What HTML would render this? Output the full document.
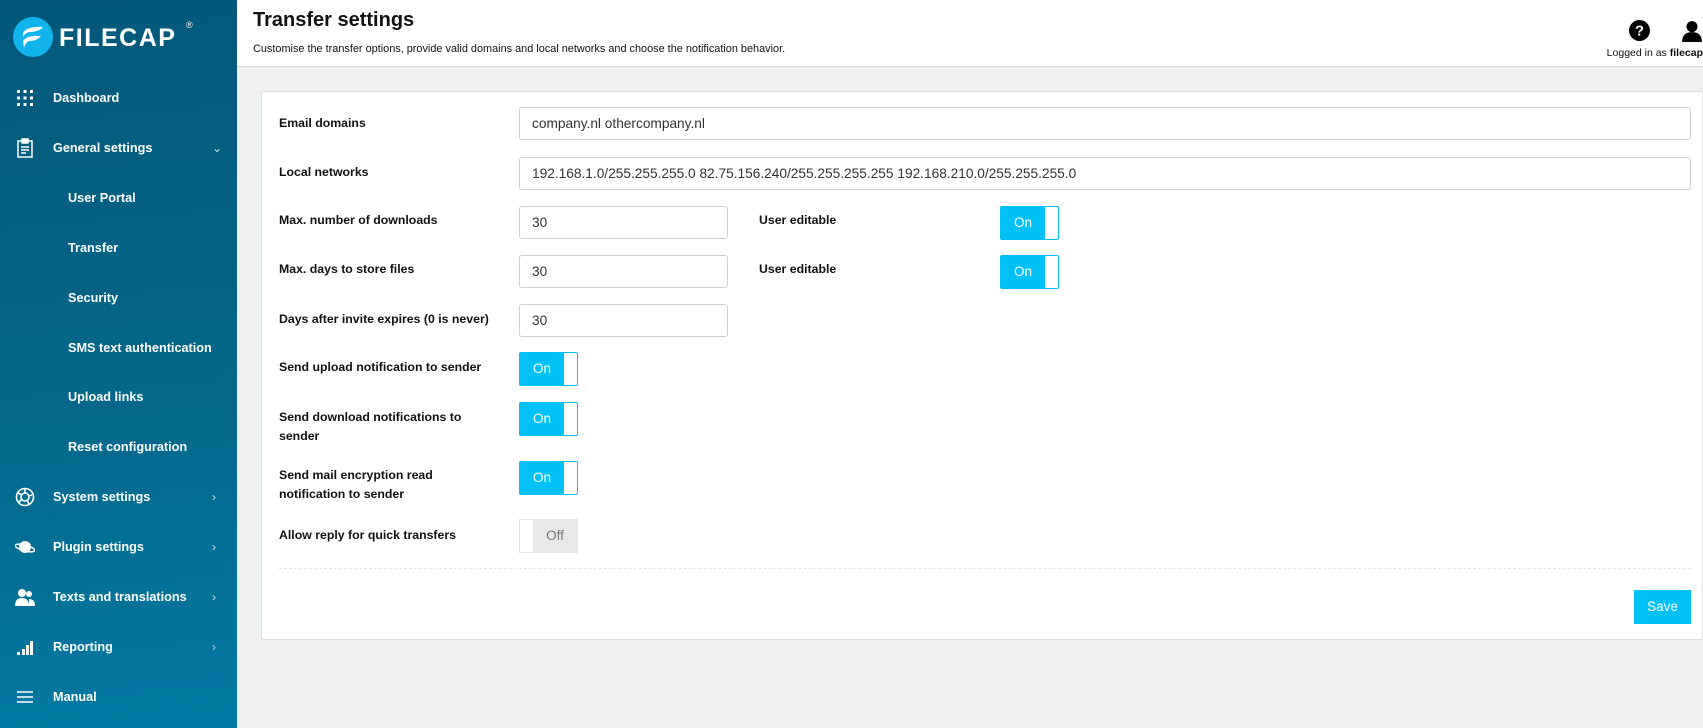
<!DOCTYPE html>
<html><head><meta charset="utf-8"><style>
*{box-sizing:border-box;margin:0;padding:0}
body{width:1703px;height:728px;overflow:hidden;font-family:"Liberation Sans",sans-serif;background:#eff0f2;position:relative;color:#111}
.sb{position:absolute;left:0;top:0;width:237px;height:728px;background:linear-gradient(175deg,#03587a 0%,#036688 50%,#0279a3 100%);color:#fff}
.logo{position:absolute;left:13px;top:17px;width:40px;height:40px;border-radius:50%;background:#11b4ec}
.logotxt{position:absolute;left:59px;top:24px;font-size:25px;font-weight:bold;letter-spacing:1.5px;color:#fff}
.reg{position:absolute;left:186px;top:20px;font-size:9px}
.it{position:absolute;left:53px;font-size:12.7px;font-weight:bold;transform:translateY(-50%)}
.sub{left:68px}
.ic{position:absolute;left:15px;width:20px;height:20px;transform:translateY(-50%)}
.chev{position:absolute;left:212px;font-size:12px;transform:translateY(-50%);color:#cfe3ea}
.hdr{position:absolute;left:237px;top:0;right:0;height:67px;background:#fff;border-bottom:1px solid #d6d8db}
h1{position:absolute;left:16px;top:9px;font-size:20px;font-weight:bold}
.desc{position:absolute;left:16px;top:43px;font-size:10.9px}
.panel{position:absolute;left:261px;top:91px;width:1442px;height:549px;background:#fff;border:1px solid #dcdfe2;border-radius:2px}
.lb{position:absolute;left:279px;font-size:12.3px;font-weight:bold;line-height:19px}
.in{position:absolute;left:519px;height:33px;border:1px solid #cfd2d5;border-radius:3px;background:#fff;font-size:13.7px;padding-left:12px;line-height:31px;color:#333}
.tg{position:absolute;width:59px;height:34px;border:1px solid #00bff5;background:#fff;border-radius:2px}
.tg .on{position:absolute;left:0;top:0;width:44px;height:100%;background:#00c0f8;color:#fff;font-size:13.5px;text-align:center;line-height:32px}
.off{position:absolute;width:59px;height:34px;border:1px solid #e4e4e4;background:#e8e8e8}
.off .k{position:absolute;left:0;top:0;width:13px;height:100%;background:#fff}
.off span{position:absolute;left:13px;right:0;text-align:center;font-size:13.5px;line-height:32px;color:#777}
</style></head><body>
<div class="sb">
<div class="logo"><svg width="40" height="40" viewBox="0 0 40 40"><path d="M10 16 Q14 9 30 10 Q26 15 16 15 Q12 16 10 20Z M10 24 Q14 18 28 19 Q24 24 16 24 Q12 26 11 31Z" fill="#fff"/></svg></div>
<div class="logotxt">FILECAP</div><div class="reg">®</div>
<svg class="ic" style="top:98px" viewBox="0 0 20 20" fill="#fff"><rect x="2" y="2" width="3" height="3"/><rect x="8.5" y="2" width="3" height="3"/><rect x="15" y="2" width="3" height="3"/><rect x="2" y="8.5" width="3" height="3"/><rect x="8.5" y="8.5" width="3" height="3"/><rect x="15" y="8.5" width="3" height="3"/><rect x="2" y="15" width="3" height="3"/><rect x="8.5" y="15" width="3" height="3"/><rect x="15" y="15" width="3" height="3"/></svg>
<div class="it" style="top:98px">Dashboard</div>
<svg class="ic" style="top:148px" viewBox="0 0 20 20" fill="none" stroke="#fff" stroke-width="1.5"><rect x="3" y="3" width="14" height="16"/><rect x="7" y="1" width="6" height="4" fill="#fff"/><path d="M6 9h8M6 12h8M6 15h5"/></svg>
<div class="it" style="top:148px">General settings</div><div class="chev" style="top:148px">⌄</div>
<div class="it sub" style="top:198px">User Portal</div>
<div class="it sub" style="top:248px">Transfer</div>
<div class="it sub" style="top:298px">Security</div>
<div class="it sub" style="top:348px">SMS text authentication</div>
<div class="it sub" style="top:397px">Upload links</div>
<div class="it sub" style="top:447px">Reset configuration</div>
<svg class="ic" style="top:497px" viewBox="0 0 20 20" fill="none" stroke="#fff" stroke-width="1.6"><circle cx="10" cy="10" r="8.5"/><circle cx="10" cy="10" r="4"/><path d="M10 2v4M17 8l-4 1M14 17l-2-4M4 15l3-3M3 6l4 2"/></svg>
<div class="it" style="top:497px">System settings</div><div class="chev" style="top:497px">›</div>
<svg class="ic" style="top:547px" viewBox="0 0 20 20" fill="#fff"><circle cx="10" cy="10" r="6"/><ellipse cx="10" cy="11" rx="10" ry="3" fill="none" stroke="#fff" stroke-width="1.5" transform="rotate(15 10 11)"/></svg>
<div class="it" style="top:547px">Plugin settings</div><div class="chev" style="top:547px">›</div>
<svg class="ic" style="top:597px" viewBox="0 0 20 20" fill="#fff"><circle cx="7" cy="6" r="4"/><path d="M0 19q0-8 7-8q7 0 7 8z"/><circle cx="14" cy="7" r="3"/><path d="M14 19h6q0-7-6-7z"/></svg>
<div class="it" style="top:597px">Texts and translations</div><div class="chev" style="top:597px">›</div>
<svg class="ic" style="top:647px" viewBox="0 0 20 20" fill="#fff"><rect x="2" y="15" width="3" height="3"/><rect x="7" y="12" width="3" height="6"/><rect x="11" y="8" width="3" height="10"/><rect x="15" y="4" width="3" height="14"/></svg>
<div class="it" style="top:647px">Reporting</div><div class="chev" style="top:647px">›</div>
<svg class="ic" style="top:697px" viewBox="0 0 20 20" stroke="#fff" stroke-width="1.6"><path d="M2 5h16M2 10h16M2 15h16"/></svg>
<div class="it" style="top:697px">Manual</div>
</div>
<div class="hdr">
<h1>Transfer settings</h1>
<div class="desc">Customise the transfer options, provide valid domains and local networks and choose the notification behavior.</div>
<svg style="position:absolute;left:1392px;top:20px" width="21" height="21" viewBox="0 0 20 20"><circle cx="10" cy="10" r="10" fill="#000"/><text x="10" y="15" text-anchor="middle" font-size="14" font-weight="bold" fill="#fff" font-family="Liberation Sans">?</text></svg>
<svg style="position:absolute;left:1444px;top:20px" width="22" height="22" viewBox="0 0 20 20" fill="#000"><circle cx="10" cy="6" r="5"/><path d="M1 20q0-9 9-9q9 0 9 9z"/></svg>
<div style="position:absolute;right:0;top:47px;font-size:10.5px">Logged in as <b>filecap</b></div>
</div>
<div class="panel"></div>
<div class="lb" style="top:114px">Email domains</div>
<div class="in" style="top:107px;width:1172px">company.nl othercompany.nl</div>
<div class="lb" style="top:163px">Local networks</div>
<div class="in" style="top:157px;width:1172px">192.168.1.0/255.255.255.0 82.75.156.240/255.255.255.255 192.168.210.0/255.255.255.0</div>
<div class="lb" style="top:211px">Max. number of downloads</div>
<div class="in" style="top:206px;width:209px">30</div>
<div class="lb" style="top:211px;left:759px">User editable</div>
<div class="tg" style="left:1000px;top:206px"><div class="on">On</div></div>
<div class="lb" style="top:260px">Max. days to store files</div>
<div class="in" style="top:255px;width:209px">30</div>
<div class="lb" style="top:260px;left:759px">User editable</div>
<div class="tg" style="left:1000px;top:255px"><div class="on">On</div></div>
<div class="lb" style="top:310px">Days after invite expires (0 is never)</div>
<div class="in" style="top:304px;width:209px">30</div>
<div class="lb" style="top:358px">Send upload notification to sender</div>
<div class="tg" style="left:519px;top:352px"><div class="on">On</div></div>
<div class="lb" style="top:408px">Send download notifications to<br>sender</div>
<div class="tg" style="left:519px;top:402px"><div class="on">On</div></div>
<div class="lb" style="top:466px">Send mail encryption read<br>notification to sender</div>
<div class="tg" style="left:519px;top:461px"><div class="on">On</div></div>
<div class="lb" style="top:526px">Allow reply for quick transfers</div>
<div class="off" style="left:519px;top:519px"><div class="k"></div><span>Off</span></div>
<div style="position:absolute;left:279px;top:568px;width:1412px;border-top:1px dashed #e2e4e6"></div>
<div style="position:absolute;left:1634px;top:590px;width:57px;height:34px;background:#00c0f8;color:#fff;font-size:13.5px;text-align:center;line-height:34px">Save</div>
</body></html>
